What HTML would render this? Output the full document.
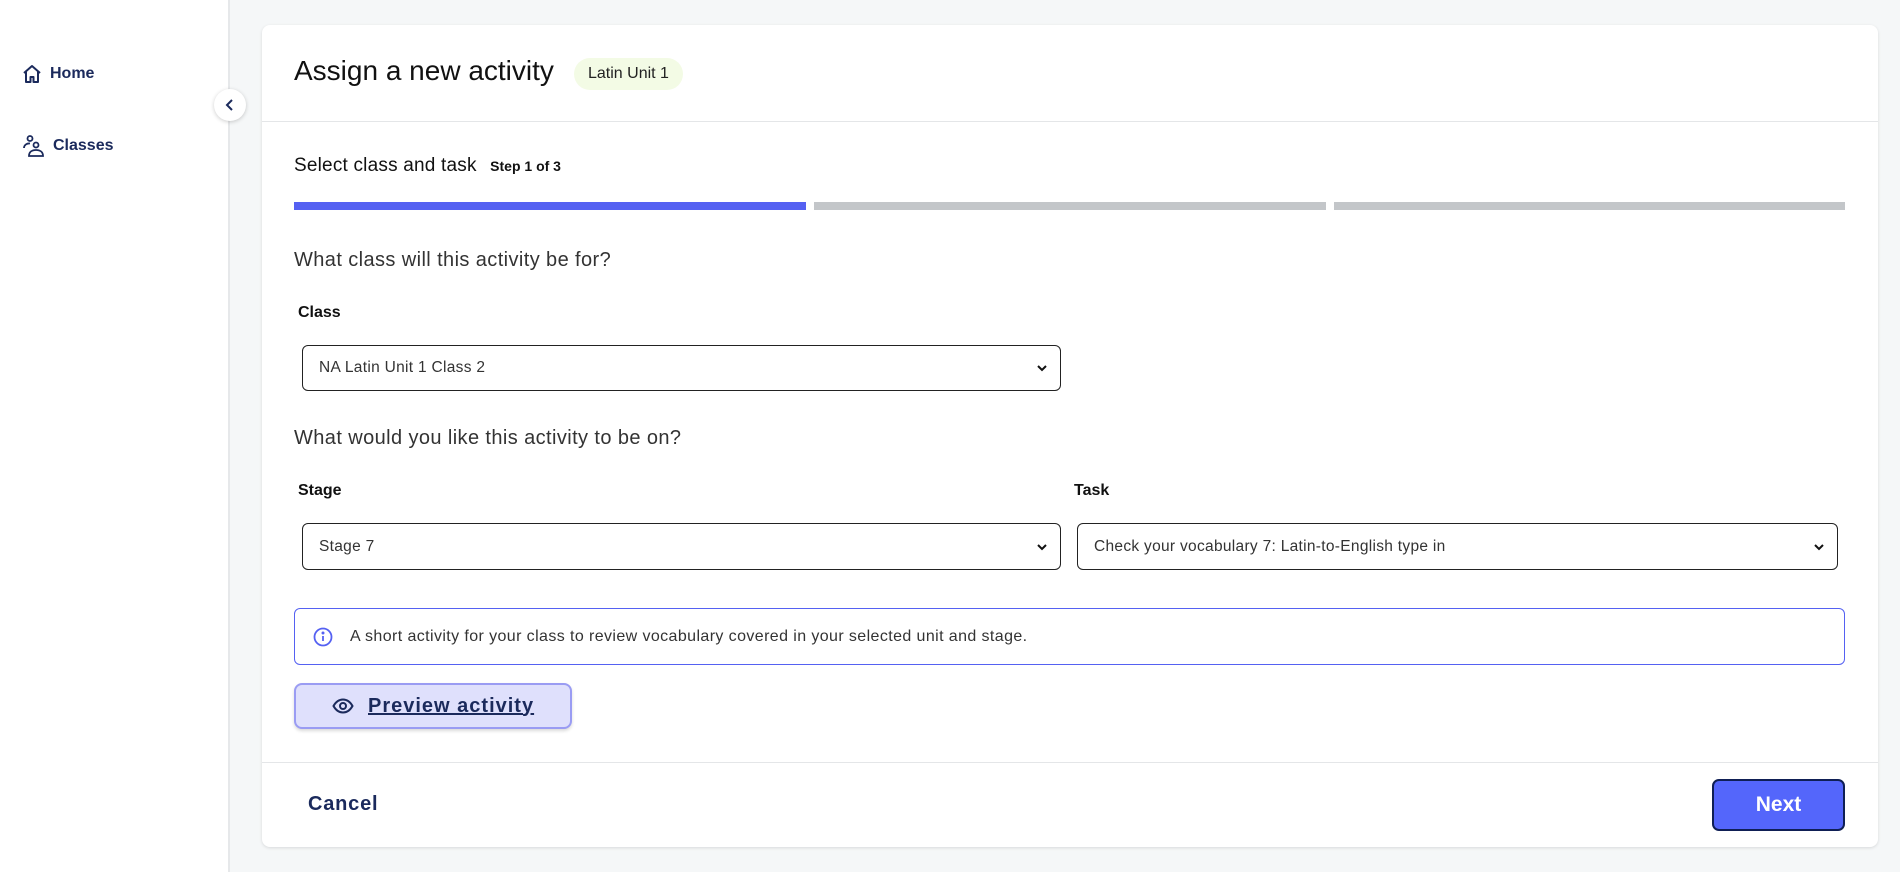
<!DOCTYPE html>
<html><head><meta charset="utf-8"><style>
*{box-sizing:border-box;margin:0;padding:0}
body{width:1900px;height:872px;background:#f5f7f8;font-family:"Liberation Sans",sans-serif;position:relative;overflow:hidden;color:#111}
.a{position:absolute}
#side{left:0;top:0;width:230px;height:872px;background:#fff;border-right:2px solid #e6e8ea}
.nav{color:#1b2a5c;font-size:16px;display:flex;align-items:center;gap:8px;font-weight:600}
#card{left:262px;top:25px;width:1616px;height:822px;background:#fff;border-radius:8px;box-shadow:0 1px 3px rgba(0,0,0,.12)}
.lbl{font-size:16px;font-weight:bold;color:#111}
.sel{border:1px solid #222;border-radius:6px;background:#fff;font-size:15.5px;letter-spacing:.3px;color:#333;padding-left:16px;display:flex;align-items:center}
.sel svg{position:absolute;right:12px;top:50%;margin-top:-5px}
.q{font-size:20px;color:#333;letter-spacing:.4px}
</style></head><body>
<div id="side" class="a">
  <div class="a nav" style="left:22px;top:64px">
    <svg width="20" height="20" viewBox="0 0 20 20" fill="none" stroke="#1b2a5c" stroke-width="2" stroke-linejoin="round"><path d="M2 9 10 2l8 7M4 7.5V18h4.5v-5h3v5H16V7.5"/></svg>Home</div>
  <div class="a nav" style="left:21px;top:134px">
    <svg width="24" height="24" viewBox="0 0 24 24" fill="none" stroke="#1b2a5c" stroke-width="1.8"><circle cx="9" cy="4.5" r="2.5"/><circle cx="15" cy="11" r="2.5"/><path d="M3 14c0-3 3-5 6-4.5M8 22c0-4 3-6 7-6s7 2 7 6z"/></svg>Classes</div>
</div>
<div class="a" style="left:214px;top:89px;width:32px;height:32px;border-radius:50%;background:#fff;box-shadow:0 1px 4px rgba(0,0,0,.2)">
  <svg class="a" style="left:10px;top:9px" width="12" height="14" viewBox="0 0 12 14" fill="none" stroke="#1b2a5c" stroke-width="2"><path d="M8 2 3 7l5 5"/></svg></div>
<div id="card" class="a">
  <div class="a" style="left:32px;top:30px;font-size:28px;color:#111">Assign a new activity</div>
  <div class="a" style="left:312px;top:33px;height:32px;padding:0 14px;border-radius:16px;background:#f3fbe5;font-size:16px;line-height:32px;color:#222">Latin Unit 1</div>
  <div class="a" style="left:0;top:96px;width:1616px;height:1px;background:#e4e6e8"></div>
  <div class="a" style="left:32px;top:130px;font-size:19px;color:#111;letter-spacing:.2px">Select class and task <span style="font-size:14px;font-weight:bold;margin-left:8px;letter-spacing:0">Step 1 of 3</span></div>
  <div class="a" style="left:32px;top:177px;width:512px;height:8px;background:#5561f2"></div>
  <div class="a" style="left:552px;top:177px;width:512px;height:8px;background:#c3c6c9"></div>
  <div class="a" style="left:1072px;top:177px;width:511px;height:8px;background:#c3c6c9"></div>
  <div class="a q" style="left:32px;top:224px">What class will this activity be for?</div>
  <div class="a lbl" style="left:36px;top:279px">Class</div>
  <div class="a sel" style="left:40px;top:320px;width:759px;height:46px">NA Latin Unit 1 Class 2<svg width="12" height="10" viewBox="0 0 12 10" fill="none" stroke="#111" stroke-width="2"><path d="M2 3l4 4 4-4"/></svg></div>
  <div class="a q" style="left:32px;top:402px">What would you like this activity to be on?</div>
  <div class="a lbl" style="left:36px;top:457px">Stage</div>
  <div class="a lbl" style="left:812px;top:457px">Task</div>
  <div class="a sel" style="left:40px;top:498px;width:759px;height:47px">Stage 7<svg width="12" height="10" viewBox="0 0 12 10" fill="none" stroke="#111" stroke-width="2"><path d="M2 3l4 4 4-4"/></svg></div>
  <div class="a sel" style="left:815px;top:498px;width:761px;height:47px">Check your vocabulary 7: Latin-to-English type in<svg width="12" height="10" viewBox="0 0 12 10" fill="none" stroke="#111" stroke-width="2"><path d="M2 3l4 4 4-4"/></svg></div>
  <div class="a" style="left:32px;top:583px;width:1551px;height:57px;border:1px solid #5561f2;border-radius:6px;font-size:16px;letter-spacing:.4px;color:#333;display:flex;align-items:center;padding-left:55px">
    <svg class="a" style="left:18px;top:18px" width="20" height="20" viewBox="0 0 20 20" fill="none" stroke="#5561f2" stroke-width="1.8"><circle cx="10" cy="10" r="8.5"/><path d="M10 9v5"/><circle cx="10" cy="6" r=".6" fill="#5561f2"/></svg>
    A short activity for your class to review vocabulary covered in your selected unit and stage.</div>
  <div class="a" style="left:32px;top:658px;width:278px;height:46px;border:2px solid #9a9cf3;border-radius:8px;background:#dfe0fc;box-shadow:0 2px 3px rgba(0,0,0,.15);display:flex;align-items:center;padding-left:36px;gap:14px;font-size:20px;font-weight:bold;color:#1b2a5c;letter-spacing:1px">
    <svg width="22" height="16" viewBox="0 0 22 16" fill="none" stroke="#1b2a5c" stroke-width="2"><path d="M1.5 8C4 3.5 7 1.5 11 1.5S18 3.5 20.5 8C18 12.5 15 14.5 11 14.5S4 12.5 1.5 8z"/><circle cx="11" cy="8" r="3"/></svg>
    <span style="text-decoration:underline">Preview activity</span></div>
  <div class="a" style="left:0;top:737px;width:1616px;height:1px;background:#e4e6e8"></div>
  <div class="a" style="left:46px;top:768px;font-size:20px;font-weight:bold;color:#1b2a5c;letter-spacing:.8px">Cancel</div>
  <div class="a" style="left:1450px;top:754px;width:133px;height:52px;border:2px solid #0f1f55;border-radius:7px;background:#5466fb;color:#fff;font-size:21px;font-weight:bold;display:flex;align-items:center;justify-content:center">Next</div>
</div>
</body></html>
